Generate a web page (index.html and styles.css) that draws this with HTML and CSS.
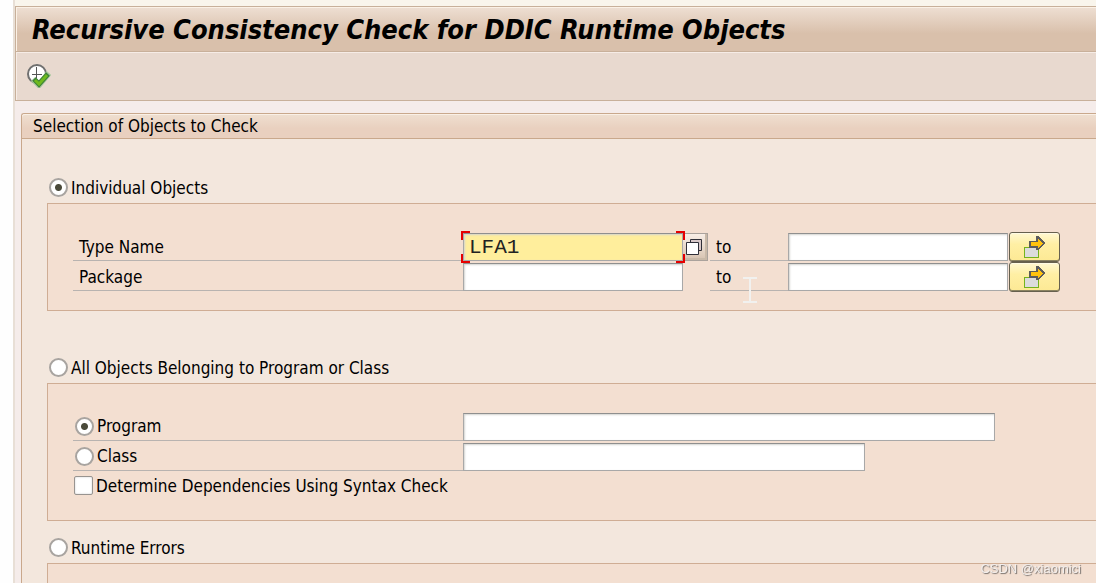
FILE: index.html
```html
<!DOCTYPE html>
<html lang="en">
  <head>
    <meta charset="UTF-8" />
    <meta name="viewport" content="width=device-width, initial-scale=1.0" />
    <title>Recursive Consistency Check for DDIC Runtime Objects</title>
    <link rel="stylesheet" href="styles.css">
  </head>
  <body>
    <svg class="defs" width="0" height="0" aria-hidden="true">
      <symbol id="icon-multi" viewBox="0 0 24 22">
        <path d="M1 11h14v10H1z" fill="#dcdcdc" stroke="#76b21c" stroke-width="1" />
        <path d="M6 5h7V0h3v1h1v1h1v1h1v1h1v1h1v1h1v2h-1v1h-1v1h-1v1h-1v1h-1v1h-1v1h-3v-2H6z" fill="#5c5c5c" />
        <path d="M8 6h7V3h1v1h1v1h1v1h1v1h1v1h-1v1h-1v1h-1v1h-1v1h-1v-2H8z" fill="#ffc20e" />
      </symbol>
    </svg>

    <div class="window">
      <header class="title-bar">
        <h1>Recursive Consistency Check for DDIC Runtime Objects</h1>
      </header>
      <div class="toolbar">
        <button type="button" class="execute" aria-label="Execute">
          <svg width="24" height="24" viewBox="0 0 24 24">
            <circle cx="10" cy="10" r="9" fill="#fff" stroke="#707070" stroke-width="2" />
            <path d="M9.500 3v11M5 10.500h10" stroke="#555" fill="none" />
            <path d="M6 15l6 6 10-12" stroke="#a9c9a0" stroke-width="6" fill="none" />
            <path d="M7 15l5 5 9-10" stroke="#3c8038" stroke-width="5" fill="none" />
            <path d="M8 16l4 4 8-9" stroke="#6fba1e" stroke-width="3" fill="none" />
          </svg>
        </button>
      </div>

      <main class="panel">
        <h2>Selection of Objects to Check</h2>
        <div class="panel-body">
          <label class="option">
            <input type="radio" name="scope" checked />Individual Objects
          </label>
          <div class="group">
            <div class="row">
              <label class="caption" for="typeLow">Type Name</label>
              <div class="field focused">
                <input type="text" id="typeLow" value="LFA1" />
              </div>
              <div class="help-slot">
                <button type="button" class="help" aria-label="Value help">
                  <svg width="18" height="18" viewBox="0 0 18 18">
                    <path d="M5.500 1.500h11v11h-11z" fill="#d8c8c8" stroke="#2f2f38" />
                    <path d="M1.500 4.500h12v12h-12z" fill="#fff" stroke="#2f2f38" />
                  </svg>
                </button>
              </div>
              <label class="to" for="typeHigh">to</label>
              <div class="field"><input type="text" id="typeHigh" /></div>
              <button type="button" class="multi" aria-label="Multiple selection for type name">
                <svg width="24" height="22" shape-rendering="crispEdges"><use href="#icon-multi" /></svg>
              </button>
            </div>
            <div class="row">
              <label class="caption" for="packageLow">Package</label>
              <div class="field"><input type="text" id="packageLow" /></div>
              <div class="help-slot"></div>
              <label class="to" for="packageHigh">to</label>
              <div class="field"><input type="text" id="packageHigh" /></div>
              <button type="button" class="multi" aria-label="Multiple selection for package">
                <svg width="24" height="22" shape-rendering="crispEdges"><use href="#icon-multi" /></svg>
              </button>
            </div>
            <svg class="ibeam" width="14" height="26" viewBox="0 0 14 26" aria-hidden="true">
              <path d="M0 1h14M0 25h14M7 1v24" stroke="#f1f1ef" stroke-width="2" fill="none" />
            </svg>
          </div>

          <label class="option spaced">
            <input type="radio" name="scope" />All Objects Belonging to Program or Class
          </label>
          <div class="group">
            <div class="row">
              <label class="caption choice">
                <input type="radio" name="source" checked />Program
              </label>
              <div class="field long"><input type="text" aria-label="Program" /></div>
            </div>
            <div class="row">
              <label class="caption choice">
                <input type="radio" name="source" />Class
              </label>
              <div class="field medium"><input type="text" aria-label="Class" /></div>
            </div>
            <label class="check">
              <input type="checkbox" />Determine Dependencies Using Syntax Check
            </label>
          </div>

          <label class="option near">
            <input type="radio" name="scope" />Runtime Errors
          </label>
          <div class="group empty"></div>
        </div>
      </main>
    </div>
    <div class="watermark">CSDN @xiaomici</div>
  </body>
</html>
```
FILE: styles.css
```css
* {
  box-sizing: border-box;
}
body {
  margin: 0;
  height: 100vh;
  overflow: hidden;
  padding-left: 13px;
  background: #fefefe;
  color: #000;
  font-family: "DejaVu Sans Condensed", "DejaVu Sans", sans-serif;
  font-size: 17px;
}
.defs {
  position: absolute;
}
.window {
  height: 100vh;
  display: flex;
  flex-direction: column;
  padding-top: 6px;
  border-left: 2px solid #e8dfd6;
  background: linear-gradient(#f9f5ec 6px, #f5ecea 6px);
}
.title-bar {
  height: 46px;
  padding-left: 16px;
  display: flex;
  align-items: center;
  flex: none;
  border: 1px solid #c8b09a;
  border-right: none;
  background: linear-gradient(#eedfd3, #d9c0ab 60%, #d9c0ab);
  box-shadow: inset 1px 1px #fbf1e6;
}
h1 {
  margin: 0;
  font-size: 27px;
  font-style: italic;
  font-weight: bold;
  white-space: nowrap;
}
.toolbar {
  height: 49px;
  padding-left: 11px;
  display: flex;
  align-items: center;
  flex: none;
  border-left: 1px solid #c8b09a;
  border-bottom: 1px solid #c8b09a;
  background: #e8d9cf;
  box-shadow: inset 1px 1px #f6ece6;
}
button {
  padding: 0;
  display: flex;
  align-items: center;
  justify-content: center;
  cursor: pointer;
}
.execute {
  border: none;
  background: none;
}
.panel {
  margin: 12px 0 0 6px;
  flex: 1;
  display: flex;
  flex-direction: column;
  border: 1px solid #c9a88c;
  border-right: none;
  border-bottom: none;
  border-top-left-radius: 3px;
  background: #f3e7dd;
}
h2 {
  margin: 0;
  height: 25px;
  padding-left: 11px;
  flex: none;
  border-bottom: 1px solid #c9a88c;
  background: linear-gradient(#efdfd0, #e9d0bf 60%);
  box-shadow: inset 0 1px #faf0e6;
  border-top-left-radius: 3px;
  font-size: 17px;
  font-weight: normal;
  line-height: 24px;
}
.panel-body {
  flex: 1;
  display: flex;
  flex-direction: column;
  padding: 33px 0 0 25px;
}
.option,
.choice,
.check {
  display: flex;
  align-items: center;
  gap: 3px;
}
.option {
  height: 31px;
  padding-left: 2px;
  flex: none;
}
.spaced {
  margin-top: 41px;
}
.near {
  margin-top: 11px;
}
.group {
  position: relative;
  padding: 28px 0 18px 25px;
  flex: none;
  border: 1px solid #cfad94;
  border-right: none;
  background: #f3dfd1;
}
.empty {
  flex: 1;
  padding: 0;
  border-bottom: none;
}
.row {
  height: 30px;
  display: flex;
  align-items: center;
}
.caption,
.to {
  height: 28px;
  padding-left: 6px;
  border-bottom: 1px solid #b8b3b0;
  line-height: 29px;
  flex: none;
}
.caption {
  width: 390px;
}
.choice {
  padding-left: 2px;
}
.to {
  width: 78px;
}
.field {
  position: relative;
  width: 220px;
  height: 28px;
  flex: none;
}
.long {
  width: 532px;
}
.medium {
  width: 402px;
}
input[type="text"] {
  width: 100%;
  height: 100%;
  padding: 0 5px;
  border: 1px solid #a8a8a8;
  border-top-color: #8f8f8f;
  outline: none;
  background: #fff;
  box-shadow: inset 1px 1px 2px #d4d4d0;
  color: #222;
  font-family: "Courier New", "Liberation Mono", monospace;
  font-size: 21px;
}
.focused input[type="text"] {
  background: #ffee9c;
}
/* red focus corners */
.focused::after {
  content: "";
  position: absolute;
  inset: -2px;
  pointer-events: none;
  --c: linear-gradient(#e60000, #e60000);
  background: var(--c) 0 0 / 9px 2px, var(--c) 0 0 / 2px 9px,
    var(--c) 100% 0 / 9px 2px, var(--c) 100% 0 / 2px 9px,
    var(--c) 0 100% / 9px 2px, var(--c) 0 100% / 2px 9px,
    var(--c) 100% 100% / 9px 2px, var(--c) 100% 100% / 2px 9px;
  background-repeat: no-repeat;
}
.help-slot {
  width: 27px;
  flex: none;
}
.help {
  width: 25px;
  height: 28px;
  padding-right: 2px;
  border: 1px solid #aaa29c;
  border-left: none;
  background: linear-gradient(#f8eee6, #d6c2b0);
  box-shadow: inset -2px -2px #c9b9a8;
}
.multi {
  width: 51px;
  height: 30px;
  margin-left: 1px;
  flex: none;
  border: 1px solid #66604e;
  border-radius: 3px;
  background: linear-gradient(#fff8d2, #ffefa4 40%, #fde994);
  box-shadow: inset 0 1px #fffbe4, inset 0 -1px #8b8361;
}
input[type="radio"],
input[type="checkbox"] {
  appearance: none;
  width: 19px;
  height: 19px;
  margin: 0;
  flex: none;
  border: 1px solid #989490;
  background: #fff;
}
input[type="radio"] {
  border: 2px solid #a8a4a0;
  border-radius: 50%;
}
input[type="radio"]:checked {
  background: radial-gradient(circle, #4a4a3a 3px, #fff 4px);
}
input[type="checkbox"] {
  border-radius: 2px;
  box-shadow: inset 0 0 2px #c8c8c8;
}
.check {
  height: 30px;
  padding: 0 0 3px 1px;
}
.ibeam {
  position: absolute;
  left: 695px;
  top: 73px;
  pointer-events: none;
}
.watermark {
  position: fixed;
  right: 15px;
  bottom: 7px;
  color: #f2eeec;
  font-family: "Liberation Sans", Arial, sans-serif;
  font-size: 13px;
  text-shadow: 1px 1px 1px #77706c;
}
```
